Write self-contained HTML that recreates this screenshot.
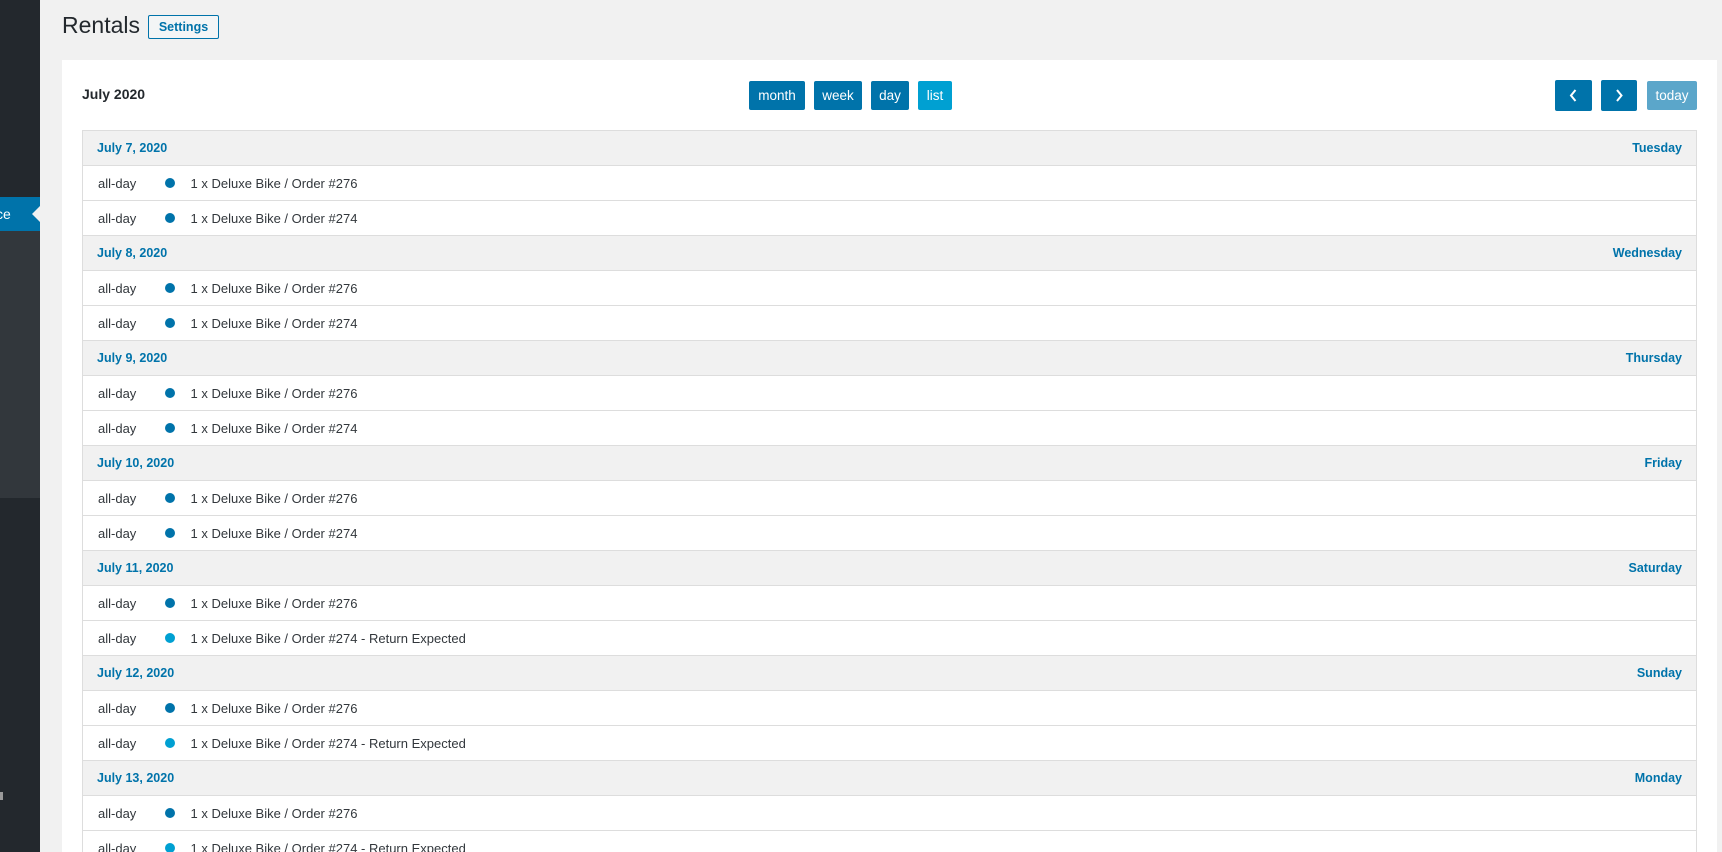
<!DOCTYPE html>
<html style="width:1722px;height:852px;overflow:hidden"><head><meta charset="utf-8"><style>
*{box-sizing:border-box;margin:0;padding:0}
body{width:1722px;height:852px;overflow:hidden;background:#f1f1f1;font-family:"Liberation Sans",sans-serif;color:#32373c}
#w{position:relative;width:1722px;height:852px;overflow:hidden}
.sb{position:absolute;left:0;top:0;width:40px;height:852px;background:#23282d}
.sub{position:absolute;left:0;top:231px;width:40px;height:267px;background:#32373c}
.act{position:absolute;left:0;top:197px;width:40px;height:34px;background:#0073aa;color:#fff;font-size:14px;line-height:34px;overflow:hidden}
.act span{position:absolute;left:-4px}
.tri{position:absolute;left:32px;top:206px;width:0;height:0;border-top:8px solid transparent;border-bottom:8px solid transparent;border-right:8px solid #f1f1f1}
h1{position:absolute;left:62px;top:12px;font-size:23px;font-weight:400;color:#23282d}
.set{position:absolute;left:148px;top:15px;width:71px;height:24px;border:1px solid #0073aa;border-radius:2px;color:#0073aa;font-size:12.5px;font-weight:bold;text-align:center;line-height:22px;background:#f3f5f6}
.panel{position:absolute;left:62px;top:60px;width:1655px;height:800px;background:#fff}
.mt{position:absolute;left:82px;top:86px;font-size:14px;font-weight:bold;color:#23282d}
.b{position:absolute;top:81px;height:29px;background:#0073aa;color:#fff;border-radius:2px;font-size:13.5px;text-align:center;line-height:29px}
table{position:absolute;left:82px;top:130px;width:1615px;border-collapse:collapse;font-size:13px;table-layout:fixed}
td{height:35px;border:1px solid #ddd;padding:0 14px;vertical-align:middle;white-space:nowrap}
tr.h td{background:#f1f1f1;color:#0073aa;font-weight:bold;font-size:12.5px}
tr.h td.r{text-align:right;border-left:none}
tr.h td.l{border-right:none}
td.t{border-right:none;color:#32373c;padding-left:15px}
td.d{padding:0;border-left:none;border-right:none}
td.d i{display:block;width:10px;height:10px;border-radius:50%;background:#0073aa;margin-left:0}
td.d i.c{background:#00a0d2}
td.e{border-left:none;padding-left:7px;color:#32373c}
</style></head><body><div id="w">
<div class="sb"></div><div class="sub"></div><div class="act"><span>ce</span></div><div class="tri"></div>
<div style="position:absolute;left:0;top:792px;width:3px;height:8px;background:#999"></div>
<h1>Rentals</h1><div class="set">Settings</div>
<div class="panel"></div>
<div class="mt">July 2020</div>
<div class="b" style="left:749px;width:56px">month</div>
<div class="b" style="left:814px;width:48px">week</div>
<div class="b" style="left:871px;width:38px">day</div>
<div class="b" style="left:918px;width:34px;background:#00a0d2">list</div>
<div class="b" style="left:1555px;width:37px;top:80px;height:31px"><svg width="37" height="31"><path d="M20.5 10 L16 15.5 L20.5 21" stroke="#fff" stroke-width="2" fill="none"/></svg></div>
<div class="b" style="left:1601px;width:36px;top:80px;height:31px"><svg width="36" height="31"><path d="M16 10 L20.5 15.5 L16 21" stroke="#fff" stroke-width="2" fill="none"/></svg></div>
<div class="b" style="left:1647px;width:50px;background:#5ba6ca">today</div>
<table>
<colgroup><col style="width:82px"><col style="width:19px"><col style="width:1200px"><col></colgroup>
<tr class="h"><td class="l" colspan="3">July 7, 2020</td><td class="r">Tuesday</td></tr>
<tr><td class="t">all-day</td><td class="d"><i></i></td><td class="e" colspan="2">1 x Deluxe Bike / Order #276</td></tr>
<tr><td class="t">all-day</td><td class="d"><i></i></td><td class="e" colspan="2">1 x Deluxe Bike / Order #274</td></tr>
<tr class="h"><td class="l" colspan="3">July 8, 2020</td><td class="r">Wednesday</td></tr>
<tr><td class="t">all-day</td><td class="d"><i></i></td><td class="e" colspan="2">1 x Deluxe Bike / Order #276</td></tr>
<tr><td class="t">all-day</td><td class="d"><i></i></td><td class="e" colspan="2">1 x Deluxe Bike / Order #274</td></tr>
<tr class="h"><td class="l" colspan="3">July 9, 2020</td><td class="r">Thursday</td></tr>
<tr><td class="t">all-day</td><td class="d"><i></i></td><td class="e" colspan="2">1 x Deluxe Bike / Order #276</td></tr>
<tr><td class="t">all-day</td><td class="d"><i></i></td><td class="e" colspan="2">1 x Deluxe Bike / Order #274</td></tr>
<tr class="h"><td class="l" colspan="3">July 10, 2020</td><td class="r">Friday</td></tr>
<tr><td class="t">all-day</td><td class="d"><i></i></td><td class="e" colspan="2">1 x Deluxe Bike / Order #276</td></tr>
<tr><td class="t">all-day</td><td class="d"><i></i></td><td class="e" colspan="2">1 x Deluxe Bike / Order #274</td></tr>
<tr class="h"><td class="l" colspan="3">July 11, 2020</td><td class="r">Saturday</td></tr>
<tr><td class="t">all-day</td><td class="d"><i></i></td><td class="e" colspan="2">1 x Deluxe Bike / Order #276</td></tr>
<tr><td class="t">all-day</td><td class="d"><i class="c"></i></td><td class="e" colspan="2">1 x Deluxe Bike / Order #274 - Return Expected</td></tr>
<tr class="h"><td class="l" colspan="3">July 12, 2020</td><td class="r">Sunday</td></tr>
<tr><td class="t">all-day</td><td class="d"><i></i></td><td class="e" colspan="2">1 x Deluxe Bike / Order #276</td></tr>
<tr><td class="t">all-day</td><td class="d"><i class="c"></i></td><td class="e" colspan="2">1 x Deluxe Bike / Order #274 - Return Expected</td></tr>
<tr class="h"><td class="l" colspan="3">July 13, 2020</td><td class="r">Monday</td></tr>
<tr><td class="t">all-day</td><td class="d"><i></i></td><td class="e" colspan="2">1 x Deluxe Bike / Order #276</td></tr>
<tr><td class="t">all-day</td><td class="d"><i class="c"></i></td><td class="e" colspan="2">1 x Deluxe Bike / Order #274 - Return Expected</td></tr>
</table>
</div></body></html>
